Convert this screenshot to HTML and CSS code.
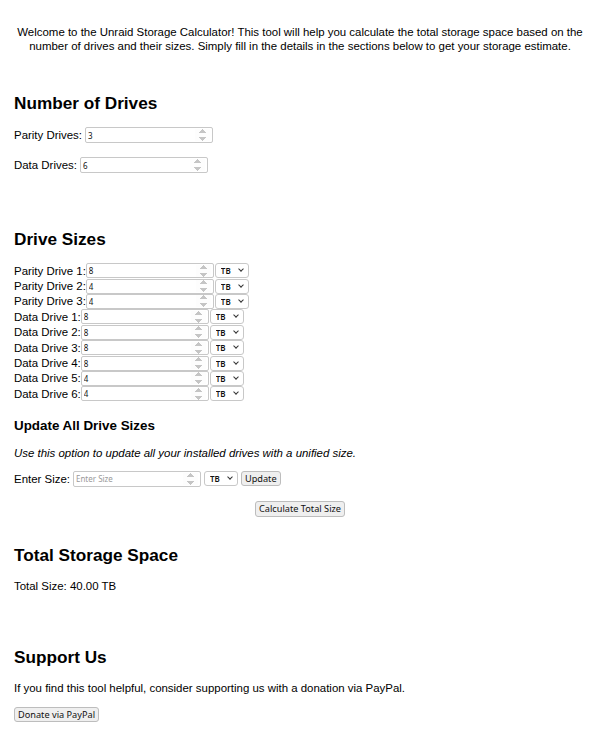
FILE: index.html
```html
<!DOCTYPE html>
<html lang="en">
<head>
    <meta charset="UTF-8">
    <meta name="viewport" content="width=device-width, initial-scale=1.0">
    <title>Unraid Storage Calculator</title>
    <link rel="stylesheet" href="styles.css">
</head>
<body>
    <p class="intro">Welcome to the Unraid Storage Calculator! This tool will help you calculate the total storage space based on the number of drives and their sizes. Simply fill in the details in the sections below to get your storage estimate.</p>

    <!-- Number of Drives -->
    <div class="section">
        <h2>Number of Drives</h2>
        <div class="field">
            <label for="parityCount">Parity Drives:</label> <input type="number" id="parityCount" value="3" min="0">
        </div>
        <div class="field">
            <label for="dataCount">Data Drives:</label> <input type="number" id="dataCount" value="6" min="0">
        </div>
    </div>

    <!-- Drive Sizes -->
    <div class="section sizes">
        <h2>Drive Sizes</h2>
        <div class="drive-list">
            <div class="drive"><label>Parity Drive 1:</label><input type="number" value="8"><span class="unit"><select><option>TB</option><option>GB</option></select></span></div>
            <div class="drive"><label>Parity Drive 2:</label><input type="number" value="4"><span class="unit"><select><option>TB</option><option>GB</option></select></span></div>
            <div class="drive"><label>Parity Drive 3:</label><input type="number" value="4"><span class="unit"><select><option>TB</option><option>GB</option></select></span></div>
            <div class="drive"><label>Data Drive 1:</label><input type="number" value="8"><span class="unit"><select><option>TB</option><option>GB</option></select></span></div>
            <div class="drive"><label>Data Drive 2:</label><input type="number" value="8"><span class="unit"><select><option>TB</option><option>GB</option></select></span></div>
            <div class="drive"><label>Data Drive 3:</label><input type="number" value="8"><span class="unit"><select><option>TB</option><option>GB</option></select></span></div>
            <div class="drive"><label>Data Drive 4:</label><input type="number" value="8"><span class="unit"><select><option>TB</option><option>GB</option></select></span></div>
            <div class="drive"><label>Data Drive 5:</label><input type="number" value="4"><span class="unit"><select><option>TB</option><option>GB</option></select></span></div>
            <div class="drive"><label>Data Drive 6:</label><input type="number" value="4"><span class="unit"><select><option>TB</option><option>GB</option></select></span></div>
        </div>

        <h3>Update All Drive Sizes</h3>
        <p class="hint">Use this option to update all your installed drives with a unified size.</p>
        <div class="field update-row">
            <label for="unifiedSize">Enter Size:</label> <input type="number" id="unifiedSize" placeholder="Enter Size"> <span class="unit"><select><option>TB</option><option>GB</option></select></span> <button>Update</button>
        </div>

        <div class="calc">
            <button>Calculate Total Size</button>
        </div>
    </div>

    <!-- Total -->
    <div class="section total">
        <h2>Total Storage Space</h2>
        <p>Total Size: 40.00 TB</p>
    </div>

    <!-- Support -->
    <div class="section support">
        <h2>Support Us</h2>
        <p>If you find this tool helpful, consider supporting us with a donation via PayPal.</p>
        <button>Donate via PayPal</button>
    </div>
</body>
</html>
```

FILE: styles.css
```css
body {
    font-family: "Liberation Sans", Arial, sans-serif;
    font-size: 11.45px;
    line-height: 14px;
    margin: 0;
    padding: 0 14px;
    color: #000;
    background: #fff;
}
p {
    margin: 0;
}
.intro {
    text-align: center;
    margin-top: 25px;
}
h2 {
    font-size: 17.2px;
    line-height: 21px;
    margin: 40px 0 13px;
}
h3 {
    font-size: 13.4px;
    line-height: 16px;
    margin: 14px 0 12px;
}
.section.sizes h2 {
    margin-top: 56px;
}
.section.total h2 {
    margin-top: 28px;
}
.section.support h2 {
    margin-top: 54px;
}
.field {
    display: flex;
    align-items: center;
    height: 16px;
    margin-bottom: 14px;
}
.field label {
    margin-right: 3px;
}
input, select, button {
    font-family: "Noto Sans", "DejaVu Sans", sans-serif;
    margin: 0;
    color: #111;
}
input[type="number"] {
    box-sizing: border-box;
    width: 128px;
    height: 16px;
    padding: 0 2px;
    font-size: 8px;
    border: 1px solid #c8c8c8;
    border-radius: 2px;
    background: #fff;
}
input[type="number"]::-webkit-inner-spin-button {
    opacity: 0.5;
    height: 12px;
}
input::placeholder {
    color: #9a9a9a;
}
.unit {
    position: relative;
    display: inline-block;
}
.unit::after {
    content: "";
    position: absolute;
    right: 6px;
    top: 4px;
    width: 3px;
    height: 3px;
    border-right: 1.2px solid #333;
    border-bottom: 1.2px solid #333;
    transform: rotate(45deg);
    pointer-events: none;
}
select {
    appearance: none;
    box-sizing: border-box;
    width: 34px;
    height: 15px;
    padding: 0 0 0 5px;
    font-size: 8px;
    font-weight: 600;
    border: 1px solid #c8c8c8;
    border-radius: 3px;
    background: #fff;
}
button {
    box-sizing: border-box;
    height: 15px;
    padding: 0 3px;
    font-size: 9.2px;
    border: 1px solid #bdbdbd;
    border-radius: 3px;
    background: #efefef;
}
.drive {
    display: flex;
    align-items: center;
    height: 15.4px;
}
.drive input[type="number"] {
    height: 15px;
    margin-right: 1px;
}
.drive-list {
    margin-bottom: 16px;
}
.hint {
    font-style: italic;
    margin-bottom: 11px;
}
.update-row .unit {
    margin: 0 3px;
}
.calc {
    text-align: center;
}
.calc button {
    width: 90px;
    height: 16px;
}
.section p + button {
    margin-top: 12px;
}
```
